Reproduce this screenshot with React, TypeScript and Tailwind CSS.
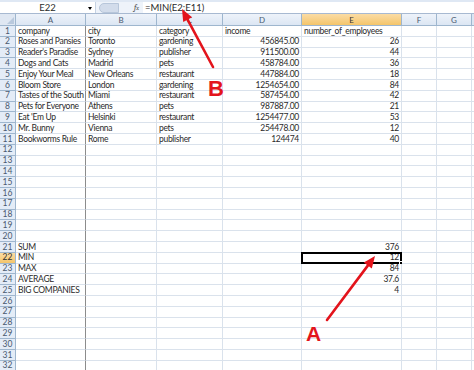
import React from 'react';

const cols = ['A', 'B', 'C', 'D', 'E', 'F', 'G'];

const data: Record<number, string[]> = {
  1: ['company', 'city', 'category', 'income', 'number_of_employees'],
  2: ['Roses and Pansies', 'Toronto', 'gardening', '456845.00', '26'],
  3: ["Reader's Paradise", 'Sydney', 'publisher', '911500.00', '44'],
  4: ['Dogs and Cats', 'Madrid', 'pets', '458784.00', '36'],
  5: ['Enjoy Your Meal', 'New Orleans', 'restaurant', '447884.00', '18'],
  6: ['Bloom Store', 'London', 'gardening', '1254654.00', '84'],
  7: ['Tastes of the South', 'Miami', 'restaurant', '587454.00', '42'],
  8: ['Pets for Everyone', 'Athens', 'pets', '987887.00', '21'],
  9: ["Eat 'Em Up", 'Helsinki', 'restaurant', '1254477.00', '53'],
  10: ['Mr. Bunny', 'Vienna', 'pets', '254478.00', '12'],
  11: ['Bookworms Rule', 'Rome', 'publisher', '124474', '40'],
  21: ['SUM', '', '', '', '376'],
  22: ['MIN', '', '', '', '12'],
  23: ['MAX', '', '', '', '84'],
  24: ['AVERAGE', '', '', '', '37.6'],
  25: ['BIG COMPANIES', '', '', '', '4'],
};

const rows = Array.from({ length: 32 }, (_, i) => i + 1);

const App = () => {
  return (
    <div
      className="relative w-[474px] h-[370px] overflow-hidden bg-white text-[#2a2a2a]"
      style={{ fontFamily: 'Lato, "Liberation Sans", sans-serif' }}
    >
      {/* Formula bar */}
      <div className="flex h-[14px] bg-[#dfe8f4] pt-[2px] border-b border-[#a7b9d1]">
        <div className="relative flex w-[96px] items-center justify-center bg-white border-r border-[#c5d2e3] text-[9.5px] leading-none">
          E22
          <span className="absolute right-[3px] top-[5px] h-0 w-0 border-x-[2.5px] border-t-[3px] border-x-transparent border-t-black" />
        </div>
        <div className="flex w-[47px] items-center bg-[#eef3fa] pl-[3px]">
          <div className="h-[10px] w-[20px] rounded-l-full bg-[#d2dceb] border border-[#b7c6da]" />
          <span className="ml-auto mr-[4px] text-[8px] italic font-serif leading-none text-[#444]">
            f<span className="text-[6px]">x</span>
          </span>
        </div>
        <div className="flex flex-1 items-center bg-white pl-[2px] text-[9.5px] leading-none">=MIN(E2:E11)</div>
      </div>

      {/* Sheet grid */}
      <div className="grid grid-cols-[16px_70px_71px_66px_79px_100px_35px_35px_1fr] grid-rows-[12px_repeat(32,10.8px)] text-[8.5px] tracking-[-0.3px]">
        {/* header row */}
        <div className="relative border-r border-b border-[#9eb6ce] bg-[#dfe7f2]">
          <span className="absolute bottom-[1px] right-[1px] h-0 w-0 border-b-[7px] border-l-[7px] border-l-transparent border-b-[#b9c9dd]" />
        </div>
        {cols.map((c) => (
          <div
            key={c}
            className={`flex items-center justify-center border-r border-b border-[#9eb6ce] text-[8px] leading-none tracking-normal ${
              c === 'E' ? 'bg-gradient-to-b from-[#fbdca4] to-[#f4c56a] text-[#333]' : 'bg-gradient-to-b from-[#eef3fa] to-[#dce6f3] text-[#4a5a70]'
            }`}
          >
            {c}
          </div>
        ))}
        <div className="border-b border-[#9eb6ce] bg-[#dce6f3]" />

        {rows.map((r) => {
          const vals = data[r] || [];
          return (
            <React.Fragment key={r}>
              <div
                className={`flex items-center justify-center border-r border-b border-[#9eb6ce] leading-none tracking-normal ${
                  r === 22 ? 'bg-gradient-to-b from-[#fbdca4] to-[#f4c56a] text-[#333]' : 'bg-[#e4ecf7] text-[#4a5a70]'
                }`}
              >
                {r}
              </div>
              {cols.map((c, ci) => {
                const v = vals[ci] || '';
                const numeric = ci >= 3 && r !== 1 && v !== '';
                return (
                  <div
                    key={c}
                    className={`relative flex items-center whitespace-nowrap border-b border-[#dae2ec] px-[2px] leading-none ${
                      ci === 0 ? 'border-r border-r-[#8c8c8c]' : 'border-r border-r-[#dae2ec]'
                    } ${numeric ? 'justify-end' : ''}`}
                  >
                    {v}
                    {r === 22 && c === 'E' && (
                      <>
                        <span className="absolute -left-[1px] -top-[1px] -right-[1px] -bottom-[1px] border-2 border-black" />
                        <span className="absolute -right-[2px] -bottom-[2px] h-[4px] w-[4px] bg-black border border-white" />
                      </>
                    )}
                  </div>
                );
              })}
              <div className="border-b border-[#dae2ec]" />
            </React.Fragment>
          );
        })}
      </div>

      {/* Annotation arrows */}
      <svg className="pointer-events-none absolute inset-0" width="474" height="370" viewBox="0 0 474 370">
        <line x1="213" y1="67" x2="187.6" y2="19.6" stroke="#e3141c" strokeWidth="2.6" strokeLinecap="round" />
        <polygon points="182,9 192.1,17.2 183.2,21.9" fill="#e3141c" />
        <line x1="327" y1="320" x2="367.8" y2="265.6" stroke="#e3141c" strokeWidth="2.6" strokeLinecap="round" />
        <polygon points="375,256 371.8,268.6 363.8,262.6" fill="#e3141c" />
      </svg>
      <span
        className="absolute left-[208px] top-[78px] text-[22px] font-bold leading-none text-[#e3141c]"
        style={{ fontFamily: '"Liberation Sans", sans-serif' }}
      >
        B
      </span>
      <span
        className="absolute left-[306px] top-[323px] text-[21px] font-bold leading-none text-[#e3141c]"
        style={{ fontFamily: '"Liberation Sans", sans-serif' }}
      >
        A
      </span>
    </div>
  );
};

export default App;
